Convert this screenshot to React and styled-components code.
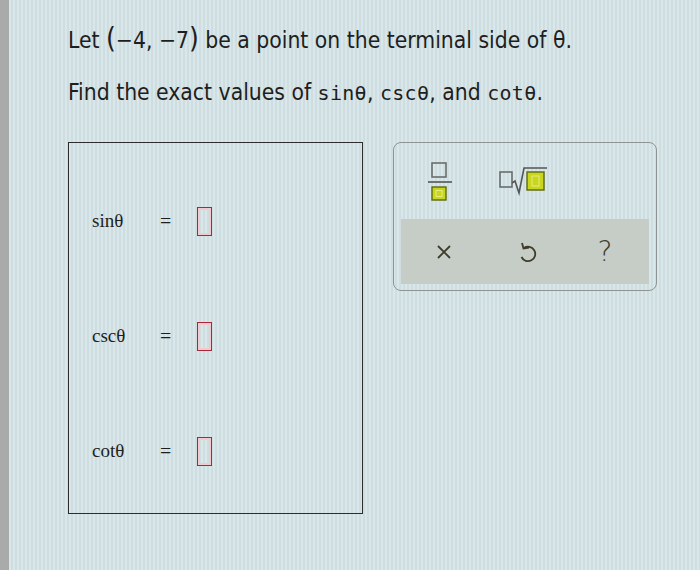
import styled, { createGlobalStyle } from "styled-components";

const Global = createGlobalStyle`
  html, body { margin: 0; padding: 0; }
  body { background: #d5e3e6; }
`;

export default function App() {
  const rows = ["sin", "csc", "cot"];
  return (
    <Page>
      <Global />
      <Question>
        Let <Paren>(</Paren>−4, −7<Paren>)</Paren> be a point on the terminal side of θ.
      </Question>
      <Question>
        Find the exact values of <Mathy>sinθ</Mathy>, <Mathy>cscθ</Mathy>, and <Mathy>cotθ</Mathy>.
      </Question>
      <Work>
        <AnswerBox>
          {rows.map((r) => (
            <Row key={r}>
              <Label>{r}θ</Label>
              <Eq>=</Eq>
              <Slot />
            </Row>
          ))}
        </AnswerBox>
        <Keypad>
          <Tools>
            <ToolBtn>
              <svg width="26" height="40" viewBox="0 0 26 40">
                <rect x="5" y="2" width="14" height="14" fill="none" stroke="#6a6f6a" strokeWidth="1.6" />
                <line x1="1" y1="21" x2="25" y2="21" stroke="#555" strokeWidth="1.6" />
                <rect x="5" y="26" width="14" height="13" fill="#c9d61c" stroke="#5b6a10" strokeWidth="1.4" />
                <rect x="9" y="29.5" width="6" height="6" fill="none" stroke="#e4ec80" strokeWidth="1" />
              </svg>
            </ToolBtn>
            <ToolBtn>
              <svg width="50" height="30" viewBox="0 0 50 30">
                <rect x="1" y="6" width="12" height="15" fill="none" stroke="#6a6f6a" strokeWidth="1.6" />
                <path d="M13 17 L16 15 L20 27 L25 2 L48 2" fill="none" stroke="#555" strokeWidth="1.6" />
                <rect x="28" y="6" width="17" height="18" fill="#c9d61c" stroke="#5b6a10" strokeWidth="1.4" />
                <rect x="33" y="10" width="7" height="10" fill="none" stroke="#e4ec80" strokeWidth="1" />
              </svg>
            </ToolBtn>
          </Tools>
          <Actions>
            <ActionBtn>
              <svg width="18" height="18" viewBox="0 0 18 18">
                <path d="M3 3 L15 15 M15 3 L3 15" stroke="#3d3d2a" strokeWidth="1.8" />
              </svg>
            </ActionBtn>
            <ActionBtn>
              <svg width="20" height="24" viewBox="0 0 20 24">
                <path d="M4 3 L5.5 8.5 L11 7.5" fill="none" stroke="#3d3d2a" strokeWidth="1.8" />
                <path d="M6 8 A7.2 7.2 0 1 1 3.5 17" fill="none" stroke="#3d3d2a" strokeWidth="1.8" />
              </svg>
            </ActionBtn>
            <ActionBtn>
              <Help>?</Help>
            </ActionBtn>
          </Actions>
        </Keypad>
      </Work>
    </Page>
  );
}

const Page = styled.div`
  box-sizing: border-box;
  width: 700px;
  height: 570px;
  border-left: 9px solid #a9abab;
  padding: 24px 0 0 59px;
  background: repeating-linear-gradient(90deg, #d8e7ea 0px, #d8e7ea 2px, #cfdde0 2px, #cfdde0 4px);
  font-family: "DejaVu Sans Condensed", "DejaVu Sans", sans-serif;
  color: #1e1e1e;
`;

const Question = styled.div`
  font-size: 22.7px;
  line-height: 30px;
  height: 53px;
  white-space: nowrap;
`;

const Paren = styled.span`
  font-size: 28px;
  font-weight: 300;
`;

const Mathy = styled.span`
  font-family: "DejaVu Sans Mono", monospace;
  font-size: 20px;
  letter-spacing: 0.3px;
`;

const Work = styled.div`
  display: flex;
  align-items: flex-start;
  gap: 30px;
  margin-top: 12px;
`;

const AnswerBox = styled.div`
  box-sizing: border-box;
  width: 295px;
  height: 372px;
  border: 1.5px solid #2c2c2c;
  padding: 63px 0 0 23px;
  display: flex;
  flex-direction: column;
  gap: 85px;
`;

const Row = styled.div`
  display: flex;
  align-items: center;
  height: 30px;
`;

const Label = styled.span`
  font-family: "Liberation Serif", serif;
  font-size: 19px;
  width: 68px;
`;

const Eq = styled.span`
  font-family: "Liberation Serif", serif;
  font-size: 20px;
  width: 37px;
`;

const Slot = styled.span`
  box-sizing: border-box;
  width: 15px;
  height: 29px;
  border: 1.5px solid #a8283a;
  box-shadow: inset 0 0 0 2px #f3c9cd;
`;

const Keypad = styled.div`
  box-sizing: border-box;
  width: 264px;
  height: 149px;
  border: 1.5px solid #8e9494;
  border-radius: 8px;
  padding: 0 7px 6px 7px;
  display: flex;
  flex-direction: column;
`;

const Tools = styled.div`
  display: flex;
  align-items: center;
  height: 76px;
  padding-left: 26px;
  gap: 46px;
`;

const ToolBtn = styled.div`
  display: flex;
  align-items: center;
`;

const Actions = styled.div`
  flex: 1;
  background: #c6ccc6;
  display: grid;
  grid-template-columns: 84px 77px 30px;
  align-items: center;
  padding-left: 28px;
`;

const ActionBtn = styled.div`
  width: 30px;
  display: flex;
  align-items: center;
  justify-content: center;
`;

const Help = styled.span`
  font-family: "DejaVu Sans", sans-serif;
  font-size: 28px;
  font-weight: 200;
  color: #3d3d2a;
`;
